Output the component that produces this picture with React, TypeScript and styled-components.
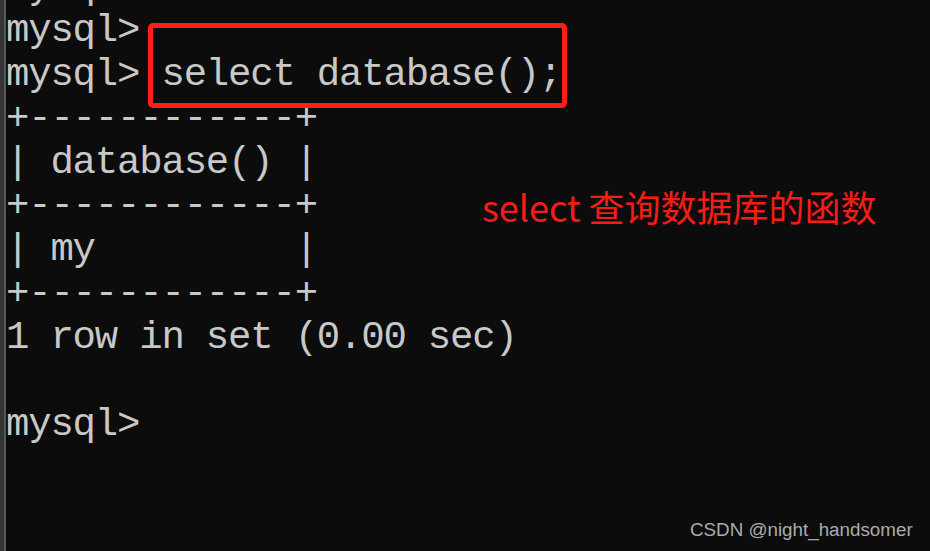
import React from "react";
import styled, { createGlobalStyle } from "styled-components";

const Global = createGlobalStyle`
  html, body {
    margin: 0;
    padding: 0;
    background: #0c0c0c;
    overflow: hidden;
  }
`;

const Screen = styled.div`
  position: relative;
  width: 930px;
  height: 551px;
  display: flex;
  overflow: hidden;
  background: #0c0c0c;
`;

const LeftEdge = styled.div`
  width: 4px;
  flex: none;
  background: #353535;
  border-right: 2px solid #585858;
`;

const Terminal = styled.div`
  flex: 1;
  background: #0c0c0c;
  overflow: hidden;
`;

const Output = styled.pre`
  margin: -33.3px 0 0 0;
  padding: 0;
  font-family: "Liberation Mono", "DejaVu Sans Mono", monospace;
  font-size: 39px;
  letter-spacing: -1.2px;
  line-height: 43.75px;
  color: #c8c8c8;
  white-space: pre;
`;

const Line = styled.div`
  height: 43.75px;
`;

const Highlight = styled.div`
  position: absolute;
  left: 148px;
  top: 23px;
  width: 419px;
  height: 85px;
  box-sizing: border-box;
  border: 5px solid #ff1e1a;
  border-radius: 5px;
`;

const Note = styled.div`
  position: absolute;
  left: 482px;
  top: 188px;
  font-family: "Microsoft YaHei", "Noto Sans CJK SC", sans-serif;
  font-size: 36px;
  line-height: 36px;
  color: #f51c16;
  white-space: nowrap;
`;

const Watermark = styled.div`
  position: absolute;
  left: 690px;
  top: 521px;
  font-family: "Liberation Sans", Arial, sans-serif;
  font-size: 18.8px;
  line-height: 18.8px;
  color: #ababab;
  white-space: nowrap;
`;

const lines = [
  "mysql>",
  "mysql>",
  "mysql> select database();",
  "+------------+",
  "| database() |",
  "+------------+",
  "| my         |",
  "+------------+",
  "1 row in set (0.00 sec)",
  "",
  "mysql>",
];

export default function App() {
  return (
    <>
      <Global />
      <Screen>
        <LeftEdge />
        <Terminal>
          <Output>
            {lines.map((l, i) => (
              <Line key={i}>{l || " "}</Line>
            ))}
          </Output>
        </Terminal>
        <Highlight />
        <Note>select 查询数据库的函数</Note>
        <Watermark>CSDN @night_handsomer</Watermark>
      </Screen>
    </>
  );
}
